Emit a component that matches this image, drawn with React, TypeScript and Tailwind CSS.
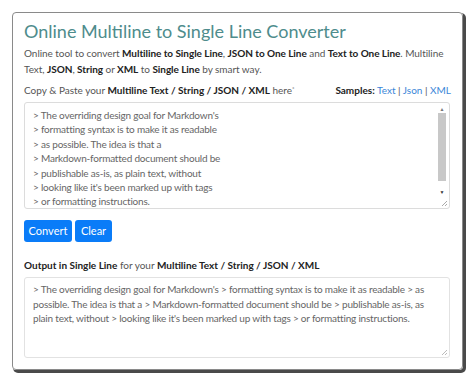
import React from "react";

const inputText = `> The overriding design goal for Markdown's
> formatting syntax is to make it as readable
> as possible. The idea is that a
> Markdown-formatted document should be
> publishable as-is, as plain text, without
> looking like it's been marked up with tags
> or formatting instructions.`;

const outputText =
  "> The overriding design goal for Markdown's > formatting syntax is to make it as readable > as possible. The idea is that a > Markdown-formatted document should be > publishable as-is, as plain text, without > looking like it's been marked up with tags > or formatting instructions.";

const font = 'Lato, "Open Sans", sans-serif';

export default function App() {
  return (
    <div className="w-[474px] h-[381px] bg-white pt-[12px] pl-[12px]" style={{ fontFamily: font }}>
      <div className="w-[451px] h-[358px] border border-[#8a8a8a] rounded-[4px] shadow-[2px_2px_0_1px_#4a4a4a] px-[11px] pt-[6px] flex flex-col text-[#555]">
        <h1 className="text-[18px] leading-[24px] text-[#4e8c8c]">
          Online Multiline to Single Line Converter
        </h1>
        <p className="text-[10px] leading-[16px] mt-[2px] whitespace-nowrap tracking-[-0.05px]">
          Online tool to convert <b className="text-[#222]">Multiline to Single Line</b>,{" "}
          <b className="text-[#222]">JSON to One Line</b> and <b className="text-[#222]">Text to One Line</b>. Multiline
          <br />
          Text, <b className="text-[#222]">JSON</b>, <b className="text-[#222]">String</b> or{" "}
          <b className="text-[#222]">XML</b> to <b className="text-[#222]">Single Line</b> by smart way.
        </p>
        <div className="flex justify-between items-center mt-[5px] text-[10px] leading-[16px] whitespace-nowrap">
          <span>
            Copy &amp; Paste your <b className="text-[#222]">Multiline Text / String / JSON / XML</b> here
            <sup className="text-[6px]">*</sup>
          </span>
          <span>
            <b className="text-[#222]">Samples:</b> <span className="text-[#3a86d8]">Text</span> |{" "}
            <span className="text-[#3a86d8]">Json</span> | <span className="text-[#3a86d8]">XML</span>
          </span>
        </div>
        <div className="mt-[4px] h-[107px] w-[426px] border border-[#dcdcdc] rounded-[3px] flex relative">
          <pre
            className="flex-1 pl-[8px] pt-[5px] text-[10px] leading-[14.4px] text-[#666] whitespace-pre overflow-hidden tracking-[-0.2px]"
            style={{ fontFamily: font }}
          >
            {inputText}
          </pre>
          <div className="w-[10px] flex flex-col items-center pt-[2px] pb-[12px] mr-[2px]">
            <div className="text-[5px] leading-[8px] text-[#777]">▲</div>
            <div className="w-[8px] h-[68px] bg-[#c8c8c8]" />
            <div className="flex-1" />
            <div className="text-[5px] leading-[8px] text-[#333]">▼</div>
          </div>
          <svg className="absolute right-[1px] bottom-[1px]" width="7" height="7" viewBox="0 0 7 7">
            <path d="M6 1 L1 6 M6 4 L4 6" stroke="#aaa" strokeWidth="1" />
          </svg>
        </div>
        <div className="flex gap-[3px] mt-[11px]">
          <button className="h-[22px] w-[48px] bg-[#0a7cf8] text-white text-[11px] rounded-[3px]">Convert</button>
          <button className="h-[22px] w-[37px] bg-[#0a7cf8] text-white text-[11px] rounded-[3px]">Clear</button>
        </div>
        <div className="mt-[15px] text-[10px] leading-[16px] whitespace-nowrap">
          <b className="text-[#222]">Output in Single Line</b> for your{" "}
          <b className="text-[#222]">Multiline Text / String / JSON / XML</b>
        </div>
        <div className="mt-[4px] h-[81px] w-[426px] border border-[#e2e2e2] rounded-[3px] pl-[8px] pr-[10px] pt-[4px] text-[10px] leading-[14.7px] text-[#666] tracking-[-0.2px] relative">
          {outputText}
          <svg className="absolute right-[1px] bottom-[1px]" width="7" height="7" viewBox="0 0 7 7">
            <path d="M6 1 L1 6 M6 4 L4 6" stroke="#bbb" strokeWidth="1" />
          </svg>
        </div>
      </div>
    </div>
  );
}
